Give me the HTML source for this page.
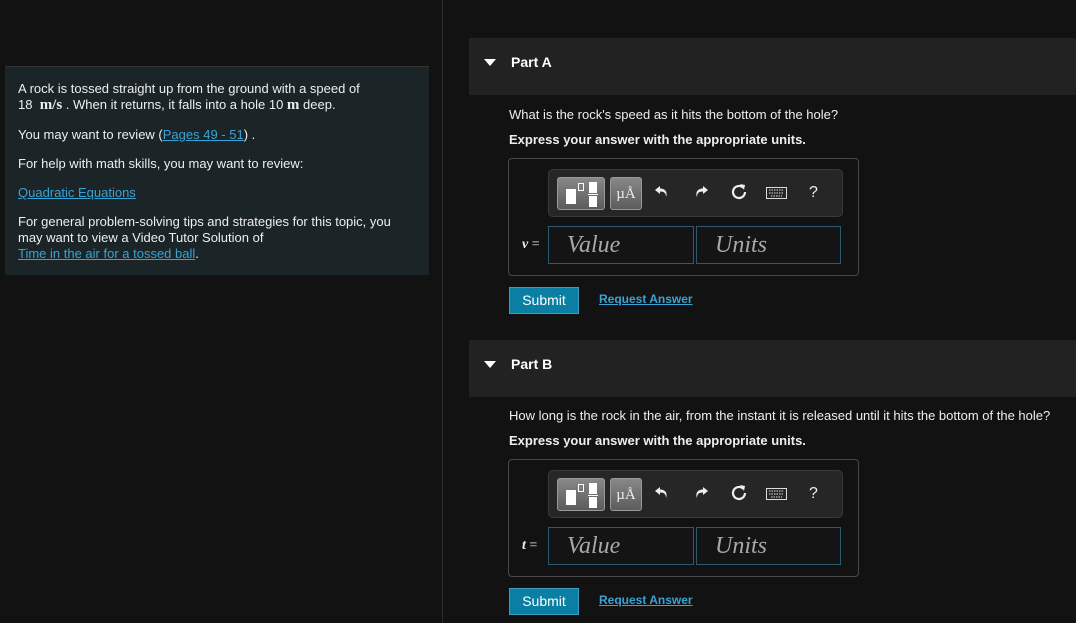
<!DOCTYPE html>
<html><head><meta charset="utf-8"><style>
*{box-sizing:border-box;margin:0;padding:0}
body{width:1076px;height:623px;background:#121212;font-family:"Liberation Sans",sans-serif;color:#e8e8e8;position:relative;overflow:hidden;font-size:13px}
.abs{position:absolute}
a{color:#3aa3d6;text-decoration:underline}
.left{left:5px;top:66px;width:424px;height:209px;background:#1b2426;border-top:1px solid #333}
.left p{position:absolute;left:13px;line-height:16px;font-size:13px;color:#eee}
.div{left:442px;top:0;width:1px;height:623px;background:#2e2e2e}
.hdr{left:469px;width:607px;height:57px;background:#222}
.hdr .tri{position:absolute;left:15px;top:21px;width:0;height:0;border-left:6px solid transparent;border-right:6px solid transparent;border-top:7px solid #fff}
.hdr b{position:absolute;left:42px;top:16px;font-size:14px;color:#fff}
.q{left:509px;font-size:13px;color:#eee}
.ex{left:509px;font-size:13px;font-weight:bold;color:#eee}
.box{left:508px;width:351px;height:118px;border:1px solid #4a4a4a;border-radius:4px}
.tb{position:absolute;left:39px;top:10px;width:295px;height:48px;background:#262626;border:1px solid #3a3a3a;border-radius:5px}
.b1{position:absolute;left:8px;top:7px;width:48px;height:33px;border-radius:3px;background:linear-gradient(#888,#5c5c5c);border:1px solid #999}
.b2{position:absolute;left:61px;top:7px;width:32px;height:33px;border-radius:3px;background:linear-gradient(#888,#5c5c5c);border:1px solid #999;font-family:"Liberation Serif",serif;color:#eee;font-size:15px;text-align:center;line-height:32px}
.ic{position:absolute;top:13px}
.inp{position:absolute;top:67px;height:38px;border:1px solid #2b5a70;background:#141414;font-family:"Liberation Serif",serif;font-style:italic;font-size:24px;color:#a8a8a8;padding-left:18px;line-height:36px}
.lab{position:absolute;left:13px;top:78px;font-family:"Liberation Serif",serif;font-size:14px;color:#eee}
.sub{left:509px;width:70px;height:27px;background:#0a7fa3;border:1px solid #3a9cbf;color:#fff;font-size:14px;text-align:center;line-height:25px}
.ra{left:599px;font-size:12px;font-weight:bold}
</style></head><body>
<div class="abs left">
<p style="top:14px">A rock is tossed straight up from the ground with a speed of<br>18 &nbsp;<span style="font-family:'Liberation Serif',serif;font-size:15px;font-weight:bold">m/s</span> . When it returns, it falls into a hole 10 <span style="font-family:'Liberation Serif',serif;font-size:15px;font-weight:bold">m</span> deep.</p>
<p style="top:60px">You may want to review (<a>Pages 49 - 51</a>) .</p>
<p style="top:89px">For help with math skills, you may want to review:</p>
<p style="top:118px"><a>Quadratic Equations</a></p>
<p style="top:147px">For general problem-solving tips and strategies for this topic, you<br>may want to view a Video Tutor Solution of<br><a>Time in the air for a tossed ball</a>.</p>
</div>
<div class="abs div"></div>

<div class="abs hdr" style="top:38px"><div class="tri"></div><b>Part A</b></div>
<div class="abs q" style="top:107px">What is the rock's speed as it hits the bottom of the hole?</div>
<div class="abs ex" style="top:132px">Express your answer with the appropriate units.</div>
<div class="abs box" style="top:158px">
 <div class="tb">
  <div class="b1"><div class="abs" style="left:8px;top:11px;width:10px;height:15px;background:#fff"></div><div class="abs" style="left:20px;top:5px;width:6px;height:8px;border:1px solid #fff"></div><div class="abs" style="left:31px;top:4px;width:8px;height:11px;background:#fff"></div><div class="abs" style="left:30px;top:16px;width:10px;height:1px;background:#fff"></div><div class="abs" style="left:31px;top:18px;width:8px;height:11px;background:#fff"></div></div>
  <div class="b2">µÅ</div>
  <svg class="ic" style="left:105px" width="16" height="18" viewBox="0 0 16 18"><path d="M6 3 L1 7 L6 11 V8.5 C10 8.5 12 10 12 14 C14 9 11 5.5 6 5.5Z" fill="#eee"/></svg>
  <svg class="ic" style="left:144px" width="16" height="18" viewBox="0 0 16 18"><path d="M10 3 L15 7 L10 11 V8.5 C6 8.5 4 10 4 14 C2 9 5 5.5 10 5.5Z" fill="#eee"/></svg>
  <svg class="ic" style="left:181px" width="18" height="18" viewBox="0 0 18 18"><path d="M13 4.5 A6 6 0 1 0 15 9" fill="none" stroke="#eee" stroke-width="2.2"/><path d="M10 1 L15 2 L14 7Z" fill="#eee"/></svg>
  <svg class="ic" style="left:217px;top:17px" width="21" height="12" viewBox="0 0 21 12"><rect x="0.5" y="0.5" width="20" height="11" fill="none" stroke="#ddd"/><path d="M3 3h15M3 6h15M5 9h11" stroke="#ddd" stroke-dasharray="1.5 1"/></svg>
  <div class="abs" style="left:260px;top:14px;font-size:16px;color:#eee">?</div>
 </div>
 <div class="lab"><i><b>v</b></i> =</div>
 <div class="inp" style="left:39px;width:146px">Value</div>
 <div class="inp" style="left:187px;width:145px">Units</div>
</div>
<div class="abs sub" style="top:287px">Submit</div>
<div class="abs ra" style="top:292px"><a>Request Answer</a></div>

<div class="abs hdr" style="top:340px"><div class="tri"></div><b>Part B</b></div>
<div class="abs q" style="top:408px">How long is the rock in the air, from the instant it is released until it hits the bottom of the hole?</div>
<div class="abs ex" style="top:433px">Express your answer with the appropriate units.</div>
<div class="abs box" style="top:459px">
 <div class="tb">
  <div class="b1"><div class="abs" style="left:8px;top:11px;width:10px;height:15px;background:#fff"></div><div class="abs" style="left:20px;top:5px;width:6px;height:8px;border:1px solid #fff"></div><div class="abs" style="left:31px;top:4px;width:8px;height:11px;background:#fff"></div><div class="abs" style="left:30px;top:16px;width:10px;height:1px;background:#fff"></div><div class="abs" style="left:31px;top:18px;width:8px;height:11px;background:#fff"></div></div>
  <div class="b2">µÅ</div>
  <svg class="ic" style="left:105px" width="16" height="18" viewBox="0 0 16 18"><path d="M6 3 L1 7 L6 11 V8.5 C10 8.5 12 10 12 14 C14 9 11 5.5 6 5.5Z" fill="#eee"/></svg>
  <svg class="ic" style="left:144px" width="16" height="18" viewBox="0 0 16 18"><path d="M10 3 L15 7 L10 11 V8.5 C6 8.5 4 10 4 14 C2 9 5 5.5 10 5.5Z" fill="#eee"/></svg>
  <svg class="ic" style="left:181px" width="18" height="18" viewBox="0 0 18 18"><path d="M13 4.5 A6 6 0 1 0 15 9" fill="none" stroke="#eee" stroke-width="2.2"/><path d="M10 1 L15 2 L14 7Z" fill="#eee"/></svg>
  <svg class="ic" style="left:217px;top:17px" width="21" height="12" viewBox="0 0 21 12"><rect x="0.5" y="0.5" width="20" height="11" fill="none" stroke="#ddd"/><path d="M3 3h15M3 6h15M5 9h11" stroke="#ddd" stroke-dasharray="1.5 1"/></svg>
  <div class="abs" style="left:260px;top:14px;font-size:16px;color:#eee">?</div>
 </div>
 <div class="lab"><i><b>t</b></i> =</div>
 <div class="inp" style="left:39px;width:146px">Value</div>
 <div class="inp" style="left:187px;width:145px">Units</div>
</div>
<div class="abs sub" style="top:588px">Submit</div>
<div class="abs ra" style="top:593px"><a>Request Answer</a></div>
</body></html>
